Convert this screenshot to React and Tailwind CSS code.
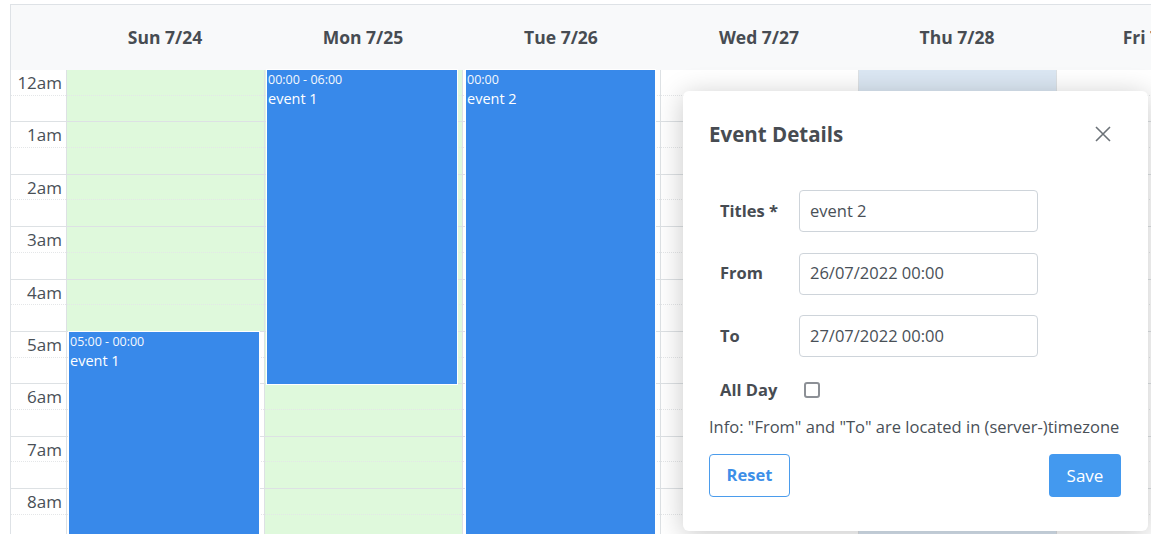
import React from "react";

const HOURS = ["12am", "1am", "2am", "3am", "4am", "5am", "6am", "7am", "8am", "9am"];
const H = 52.4;

const days = [
  {
    label: "Sun 7/24",
    bg: [{ from: 0, to: 5, color: "bg-[#dff9dc]" }],
    events: [{ from: 5, to: 10, time: "05:00 - 00:00", title: "event 1", left: 2, right: 5 }],
  },
  {
    label: "Mon 7/25",
    bg: [{ from: 0, to: 10, color: "bg-[#dff9dc]" }],
    events: [{ from: 0, to: 6, time: "00:00 - 06:00", title: "event 1", left: 2, right: 5 }],
  },
  {
    label: "Tue 7/26",
    bg: [],
    events: [{ from: 0, to: 10, time: "00:00", title: "event 2", left: 3, right: 5 }],
  },
  { label: "Wed 7/27", bg: [], events: [] },
  { label: "Thu 7/28", bg: [{ from: 0, to: 10, color: "bg-[#dbe7f3]" }], events: [] },
  { label: "Fri 7/29", bg: [], events: [] },
];

function HourLines() {
  return (
    <div className="relative">
      {HOURS.map((h) => (
        <div key={h} className="h-[52.4px] border-b border-[#dde1e4]">
          <div className="h-1/2 border-b border-dotted border-[#e4e6e8]" />
        </div>
      ))}
    </div>
  );
}

function DayColumn({ day }) {
  return (
    <div className="relative w-[198px] shrink-0 border-l border-[#dde1e4]">
      {day.bg.map((b, i) => (
        <div
          key={i}
          className={`absolute left-0 right-0 ${b.color}`}
          style={{ top: b.from * H, height: (b.to - b.from) * H }}
        />
      ))}
      <HourLines />
      {day.events.map((e, i) => (
        <div
          key={i}
          className="absolute z-10 bg-[#3889ea] text-white px-[1px] shadow-[0_0_0_1px_#fff]"
          style={{ top: e.from * H, height: (e.to - e.from) * H, left: e.left, right: e.right }}
        >
          <div className="text-[12.5px] leading-[18px] pt-[1px] opacity-95">{e.time}</div>
          <div className="text-[14.5px] leading-[20px]">{e.title}</div>
        </div>
      ))}
    </div>
  );
}

function Field({ label, value }) {
  return (
    <div className="flex items-center h-[42px]">
      <label className="w-[90px] pl-[11px] font-bold text-[#474c52]">{label}</label>
      <div className="w-[239px] h-[42px] border border-[#ced4da] rounded-[4px] px-[10px] flex items-center text-[#495057]">
        {value}
      </div>
    </div>
  );
}

export default function App() {
  return (
    <div
      className="relative w-[1151px] h-[534px] overflow-hidden bg-white text-[16.5px]"
      style={{ fontFamily: '"Open Sans", "Noto Sans", sans-serif' }}
    >
      <div className="ml-[10px] mt-[4px] border-l border-t border-[#dee2e6]">
        <div className="flex h-[65px] bg-[#f8f9fa]">
          <div className="w-[55px] shrink-0" />
          {days.map((d) => (
            <div
              key={d.label}
              className="w-[198px] shrink-0 flex items-center justify-center font-bold text-[17.5px] text-[#474c52] whitespace-nowrap"
            >
              {d.label}
            </div>
          ))}
        </div>
        <div className="flex">
          <div className="w-[55px] shrink-0">
            {HOURS.map((h) => (
              <div key={h} className="h-[52.4px] border-b border-[#dde1e4] relative">
                <div className="h-1/2 border-b border-dotted border-[#e4e6e8]" />
                <div className="absolute top-[0px] right-[4px] text-[17px] text-[#495057] leading-[26px]">{h}</div>
              </div>
            ))}
          </div>
          {days.map((d) => (
            <DayColumn key={d.label} day={d} />
          ))}
        </div>
      </div>

      <div className="absolute left-[683px] top-[91px] w-[465px] h-[440px] bg-white rounded-[6px] shadow-[0_4px_28px_rgba(0,0,0,0.22)] pl-[26px] pr-[27px] z-20">
        <div className="flex items-center justify-between h-[86px]">
          <h2 className="text-[20.5px] font-bold text-[#474c52]">Event Details</h2>
          <button className="mr-[10px] text-[#6c7278]">
            <svg width="16" height="16" viewBox="0 0 16 16" fill="none" stroke="currentColor" strokeWidth="1.6">
              <path d="M1 1l14 14M15 1L1 15" />
            </svg>
          </button>
        </div>
        <div className="flex flex-col gap-[20.5px] mt-[13px]">
          <Field label="Titles *" value="event 2" />
          <Field label="From" value="26/07/2022 00:00" />
          <Field label="To" value="27/07/2022 00:00" />
        </div>
        <div className="flex items-center h-[24px] mt-[21px]">
          <span className="w-[95px] pl-[11px] font-bold text-[#474c52]">All Day</span>
          <span className="w-[16px] h-[16px] border-2 border-[#8c9096] rounded-[3px]" />
        </div>
        <p className="mt-[13px] text-[#495057] leading-[24px] whitespace-nowrap">
          Info: "From" and "To" are located in (server-)timezone
        </p>
        <div className="flex justify-between mt-[15px]">
          <button className="w-[81px] h-[43px] border border-[#4b9cec] rounded-[4px] text-[#3d8fe8] font-bold">
            Reset
          </button>
          <button className="w-[72px] h-[43px] bg-[#4399ef] rounded-[4px] text-white text-[17px]">Save</button>
        </div>
      </div>
    </div>
  );
}
